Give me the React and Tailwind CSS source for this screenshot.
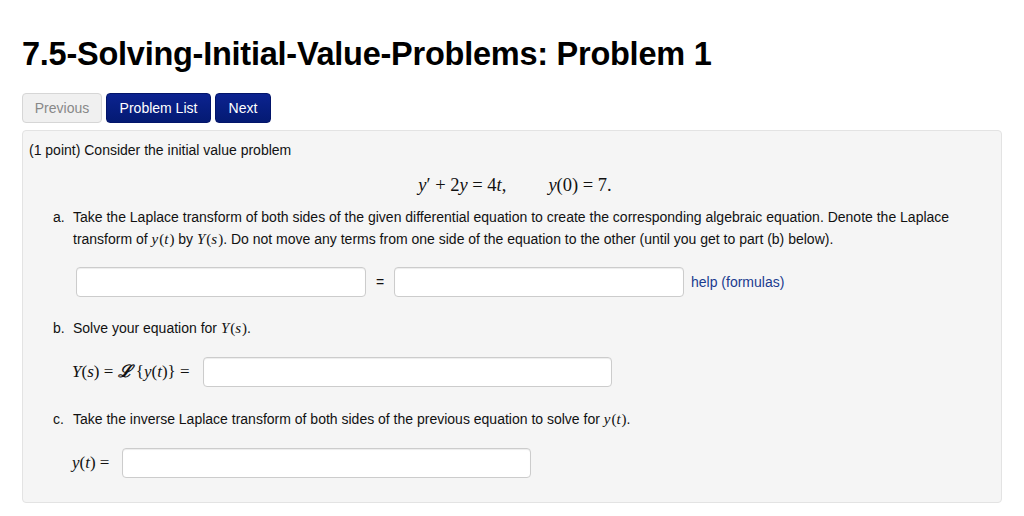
import React from 'react'

const sans = { fontFamily: '"Liberation Sans", Arial, Helvetica, sans-serif' }
const serif = { fontFamily: '"Liberation Serif", "Times New Roman", serif' }

// inline math such as y(t), Y(s)
function Fn({ f, v }) {
  return (
    <span className="text-[15px] leading-none" style={serif}>
      <i className="pr-px">{f}</i>(<i className="pr-px">{v}</i>)
    </span>
  )
}

function Field({ w }) {
  return (
    <input
      type="text"
      className={`h-[30px] ${w} bg-white border border-[#cccccc] rounded-[4px] shadow-[inset_0_1px_1px_rgba(0,0,0,0.075)]`}
    />
  )
}

export default function App() {
  return (
    <div className="w-[1024px] h-[516px] bg-white text-[#111] overflow-hidden" style={sans}>
      <div className="pl-[22px] pt-[36px]">
        <h1 className="text-[32.5px] leading-[36px] font-bold text-black tracking-[-0.25px]">
          7.5-Solving-Initial-Value-Problems: Problem 1
        </h1>

        <div className="flex gap-[4px] mt-[21px]">
          <button className="w-[80px] h-[30px] text-[14px] text-[#888] bg-[#f0f0f0] border border-[#d6d6d6] rounded-[4px]">
            Previous
          </button>
          <button className="w-[105px] h-[30px] text-[14px] text-white bg-gradient-to-b from-[#0c2390] to-[#041a73] border border-[#03156a] rounded-[4px]">
            Problem List
          </button>
          <button className="w-[56px] h-[30px] text-[14px] text-white bg-gradient-to-b from-[#0c2390] to-[#041a73] border border-[#03156a] rounded-[4px]">
            Next
          </button>
        </div>

        <div className="mt-[7px] w-[980px] h-[373px] bg-[#f5f5f5] border border-[#e3e3e3] rounded-[4px] text-[14px] leading-[22px] pl-[6px] pt-[8px]">
          <p>(1 point) Consider the initial value problem</p>

          <div className="flex justify-center mt-[13px] text-[18.5px] leading-[22px]" style={serif}>
            <span>
              <i>y</i>′ + 2<i>y</i> = 4<i>t</i>,
            </span>
            <span className="ml-[42px]">
              <i>y</i>(0) = 7.
            </span>
          </div>

          <div className="flex mt-[10px] pl-[24px]">
            <span className="w-[20px] shrink-0">a.</span>
            <p className="pr-[30px]">
              Take the Laplace transform of both sides of the given differential equation to create the corresponding algebraic equation. Denote the Laplace transform of <Fn f="y" v="t" /> by <Fn f="Y" v="s" />. Do not move any terms from one side of the equation to the other (until you get to part (b) below).
            </p>
          </div>

          <div className="flex items-center mt-[17px] pl-[47px]">
            <Field w="w-[290px]" />
            <span className="w-[28px] text-center text-[14px]">=</span>
            <Field w="w-[290px]" />
            <a className="ml-[7px] text-[#1a3b8f]">help (formulas)</a>
          </div>

          <div className="flex mt-[20px] pl-[24px]">
            <span className="w-[20px] shrink-0">b.</span>
            <p>
              Solve your equation for <Fn f="Y" v="s" />.
            </p>
          </div>

          <div className="flex items-center mt-[18px] pl-[43px]">
            <span className="text-[17px] mr-[13px]" style={serif}>
              <i>Y</i>(<i>s</i>) = <i className="font-bold">ℒ</i> {'{'}<i>y</i>(<i>t</i>){'}'} =
            </span>
            <Field w="w-[409px]" />
          </div>

          <div className="flex mt-[21px] pl-[24px]">
            <span className="w-[20px] shrink-0">c.</span>
            <p>
              Take the inverse Laplace transform of both sides of the previous equation to solve for <Fn f="y" v="t" />.
            </p>
          </div>

          <div className="flex items-center mt-[18px] pl-[43px]">
            <span className="text-[17px] mr-[13px]" style={serif}>
              <i>y</i>(<i>t</i>) =
            </span>
            <Field w="w-[409px]" />
          </div>
        </div>
      </div>
    </div>
  )
}
